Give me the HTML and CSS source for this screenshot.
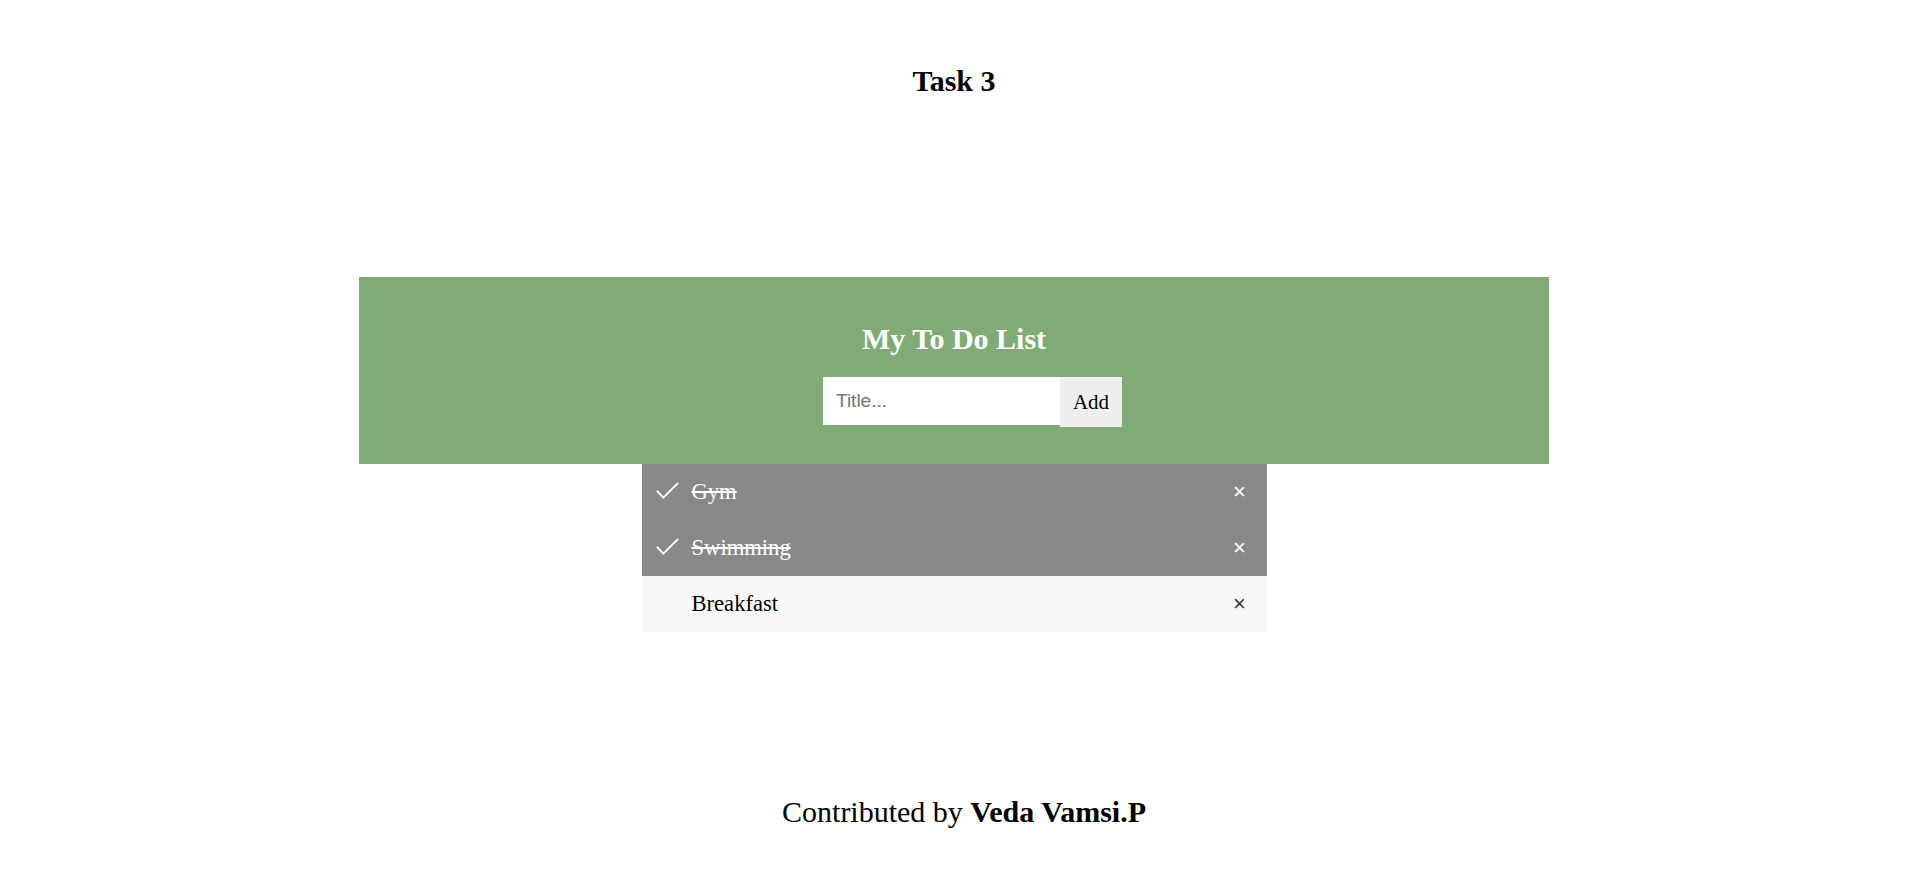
FILE: index.html
```html
<!DOCTYPE html>
<html lang="en">
<head>
<meta charset="utf-8">
<title>Task 3</title>
<link rel="stylesheet" href="styles.css">
</head>
<body>
<div class="page">
  <h2 class="task">Task 3</h2>
  <div class="header">
    <h2 class="title">My To Do List</h2>
    <div class="form">
      <input class="input" type="text" placeholder="Title...">
      <span class="add">Add</span>
    </div>
  </div>
  <ul class="list">
    <li class="item checked">
      <svg class="check" viewBox="0 0 23 17" width="23" height="17"><polyline points="0.8,8.6 7.4,15.6 22.2,0.8" fill="none" stroke="#fff" stroke-width="1.9"/></svg>
      <span class="text">Gym</span>
      <span class="close">×</span>
    </li>
    <li class="item checked">
      <svg class="check" viewBox="0 0 23 17" width="23" height="17"><polyline points="0.8,8.6 7.4,15.6 22.2,0.8" fill="none" stroke="#fff" stroke-width="1.9"/></svg>
      <span class="text">Swimming</span>
      <span class="close">×</span>
    </li>
    <li class="item">
      <span class="spacer"></span>
      <span class="text">Breakfast</span>
      <span class="close">×</span>
    </li>
  </ul>
  <p class="footer">Contributed by <b>Veda Vamsi.P</b></p>
</div>
</body>
</html>
```
FILE: styles.css
```css
body {
  margin: 0;
  background: #fff;
  font-family: "Liberation Serif", "Times New Roman", serif;
  color: #000;
}
.page {
  width: 1908px;
}
.task {
  margin: 64px 0 0;
  font-size: 30px;
  line-height: 33px;
  text-align: center;
}
.header {
  box-sizing: border-box;
  width: 1190px;
  height: 187px;
  margin: 180px auto 0;
  padding-top: 45px;
  background: #80ab77;
}
.title {
  margin: 0;
  font-size: 30px;
  line-height: 33px;
  color: #fff;
  text-align: center;
}
.form {
  display: flex;
  justify-content: center;
  align-items: flex-start;
  margin-top: 22px;
  padding-left: 37px;
}
.input {
  box-sizing: border-box;
  width: 237px;
  height: 48px;
  margin: 0;
  padding: 0 13px;
  border: none;
  border-radius: 0;
  outline: none;
  font-family: "Liberation Sans", Arial, sans-serif;
  font-size: 19px;
  color: #000;
}
.input::placeholder {
  color: #757575;
}
.add {
  width: 62px;
  height: 50px;
  display: flex;
  align-items: center;
  justify-content: center;
  background: #eee;
  font-size: 21px;
}
.list {
  list-style: none;
  width: 625px;
  margin: 0 auto;
  padding: 0;
}
.item {
  display: grid;
  grid-template-columns: 36px 1fr 54px;
  align-items: center;
  height: 56px;
  padding-left: 14px;
  background: #f8f8f8;
  font-size: 22.6px;
  color: #000;
}
.item.checked {
  background: #888;
  color: #fff;
}
.checked .text {
  text-decoration: line-through;
}
.check {
  display: block;
  align-self: start;
  margin-top: 18px;
}
.close {
  text-align: center;
  font-family: "Liberation Sans", Arial, sans-serif;
  font-size: 22px;
  color: #333;
}
.checked .close {
  color: #fff;
}
.footer {
  margin: 163px 0 0;
  padding-left: 20px;
  font-size: 30px;
  line-height: 33px;
  text-align: center;
}
```
